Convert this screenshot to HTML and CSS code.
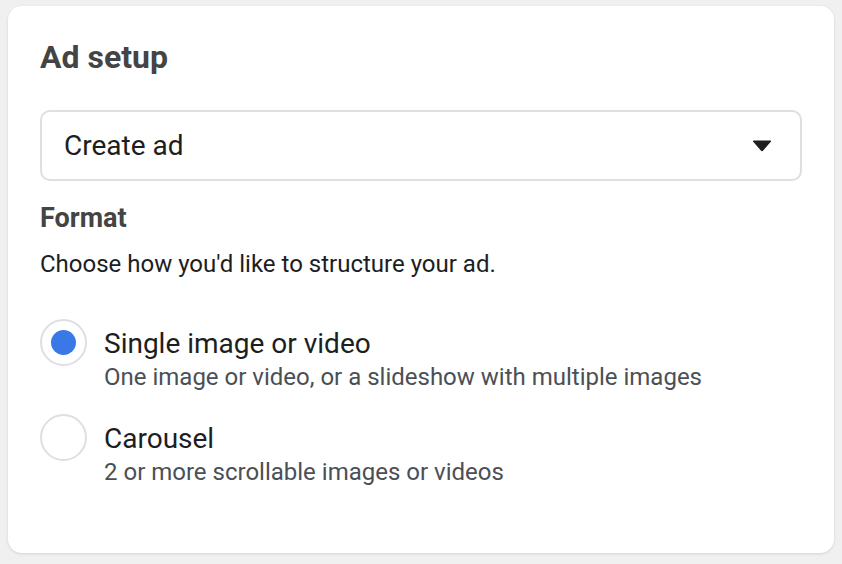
FILE: index.html
```html
<!DOCTYPE html>
<html lang="en">
<head>
    <meta charset="UTF-8">
    <meta name="viewport" content="width=device-width, initial-scale=1.0">
    <title>Ad setup</title>
    <link rel="stylesheet" href="styles.css">
</head>
<body>

    <section class="card">
        <h2 class="card-title">Ad setup</h2>

        <div class="select">
            <span class="select-value">Create ad</span>
            <svg class="select-caret" width="20" height="12" viewBox="0 0 20 12">
                <path d="M1 1.5 Q0.5 0.5 2 0.5 H18 Q19.5 0.5 19 1.5 L11.2 10.6 Q10 11.8 8.8 10.6 Z" fill="#1c1e21"/>
            </svg>
        </div>

        <h3 class="section-title">Format</h3>
        <p class="section-desc">Choose how you'd like to structure your ad.</p>

        <div class="options">
            <label class="option">
                <span class="radio checked"></span>
                <span class="option-text">
                    <span class="option-name">Single image or video</span>
                    <span class="option-desc">One image or video, or a slideshow with multiple images</span>
                </span>
            </label>
            <label class="option">
                <span class="radio"></span>
                <span class="option-text">
                    <span class="option-name">Carousel</span>
                    <span class="option-desc">2 or more scrollable images or videos</span>
                </span>
            </label>
        </div>
    </section>

</body>
</html>
```

FILE: styles.css
```css
body {
    margin: 0;
    padding: 6px 8px;
    background-color: #f0f0f0;
    font-family: Roboto, "Liberation Sans", Arial, sans-serif;
    color: #1c1e21;
}
.card {
    background-color: white;
    border-radius: 14px;
    box-shadow: 0 1px 3px rgba(0, 0, 0, 0.12);
    height: 547px;
    box-sizing: border-box;
    padding: 31px 32px 0;
}
.card-title {
    margin: 0;
    font-size: 32px;
    font-weight: bold;
    line-height: 40px;
    color: #444;
}
.select {
    margin-top: 33px;
    height: 71px;
    box-sizing: border-box;
    border: 2px solid #dddfe2;
    border-radius: 10px;
    display: flex;
    align-items: center;
    justify-content: space-between;
    padding: 0 28px 0 22px;
}
.select-value {
    font-size: 28px;
}
.section-title {
    margin: 20px 0 0;
    font-size: 27px;
    font-weight: bold;
    line-height: 34px;
    color: #444;
}
.section-desc {
    margin: 14px 0 0;
    font-size: 24px;
    line-height: 30px;
}
.options {
    margin-top: 40px;
    display: flex;
    flex-direction: column;
    gap: 22px;
}
.option {
    display: flex;
    align-items: flex-start;
    gap: 17px;
}
.radio {
    width: 47px;
    height: 47px;
    box-sizing: border-box;
    border: 2px solid #dddfe2;
    border-radius: 50%;
    display: flex;
    align-items: center;
    justify-content: center;
    flex-shrink: 0;
}
.radio.checked::after {
    content: "";
    width: 25px;
    height: 25px;
    border-radius: 50%;
    background-color: #3b78e7;
}
.option-text {
    display: flex;
    flex-direction: column;
}
.option-name {
    font-size: 28px;
    line-height: 36px;
    margin-top: 7px;
}
.option-desc {
    font-size: 24px;
    line-height: 30px;
    color: #4b4f56;
}
```
